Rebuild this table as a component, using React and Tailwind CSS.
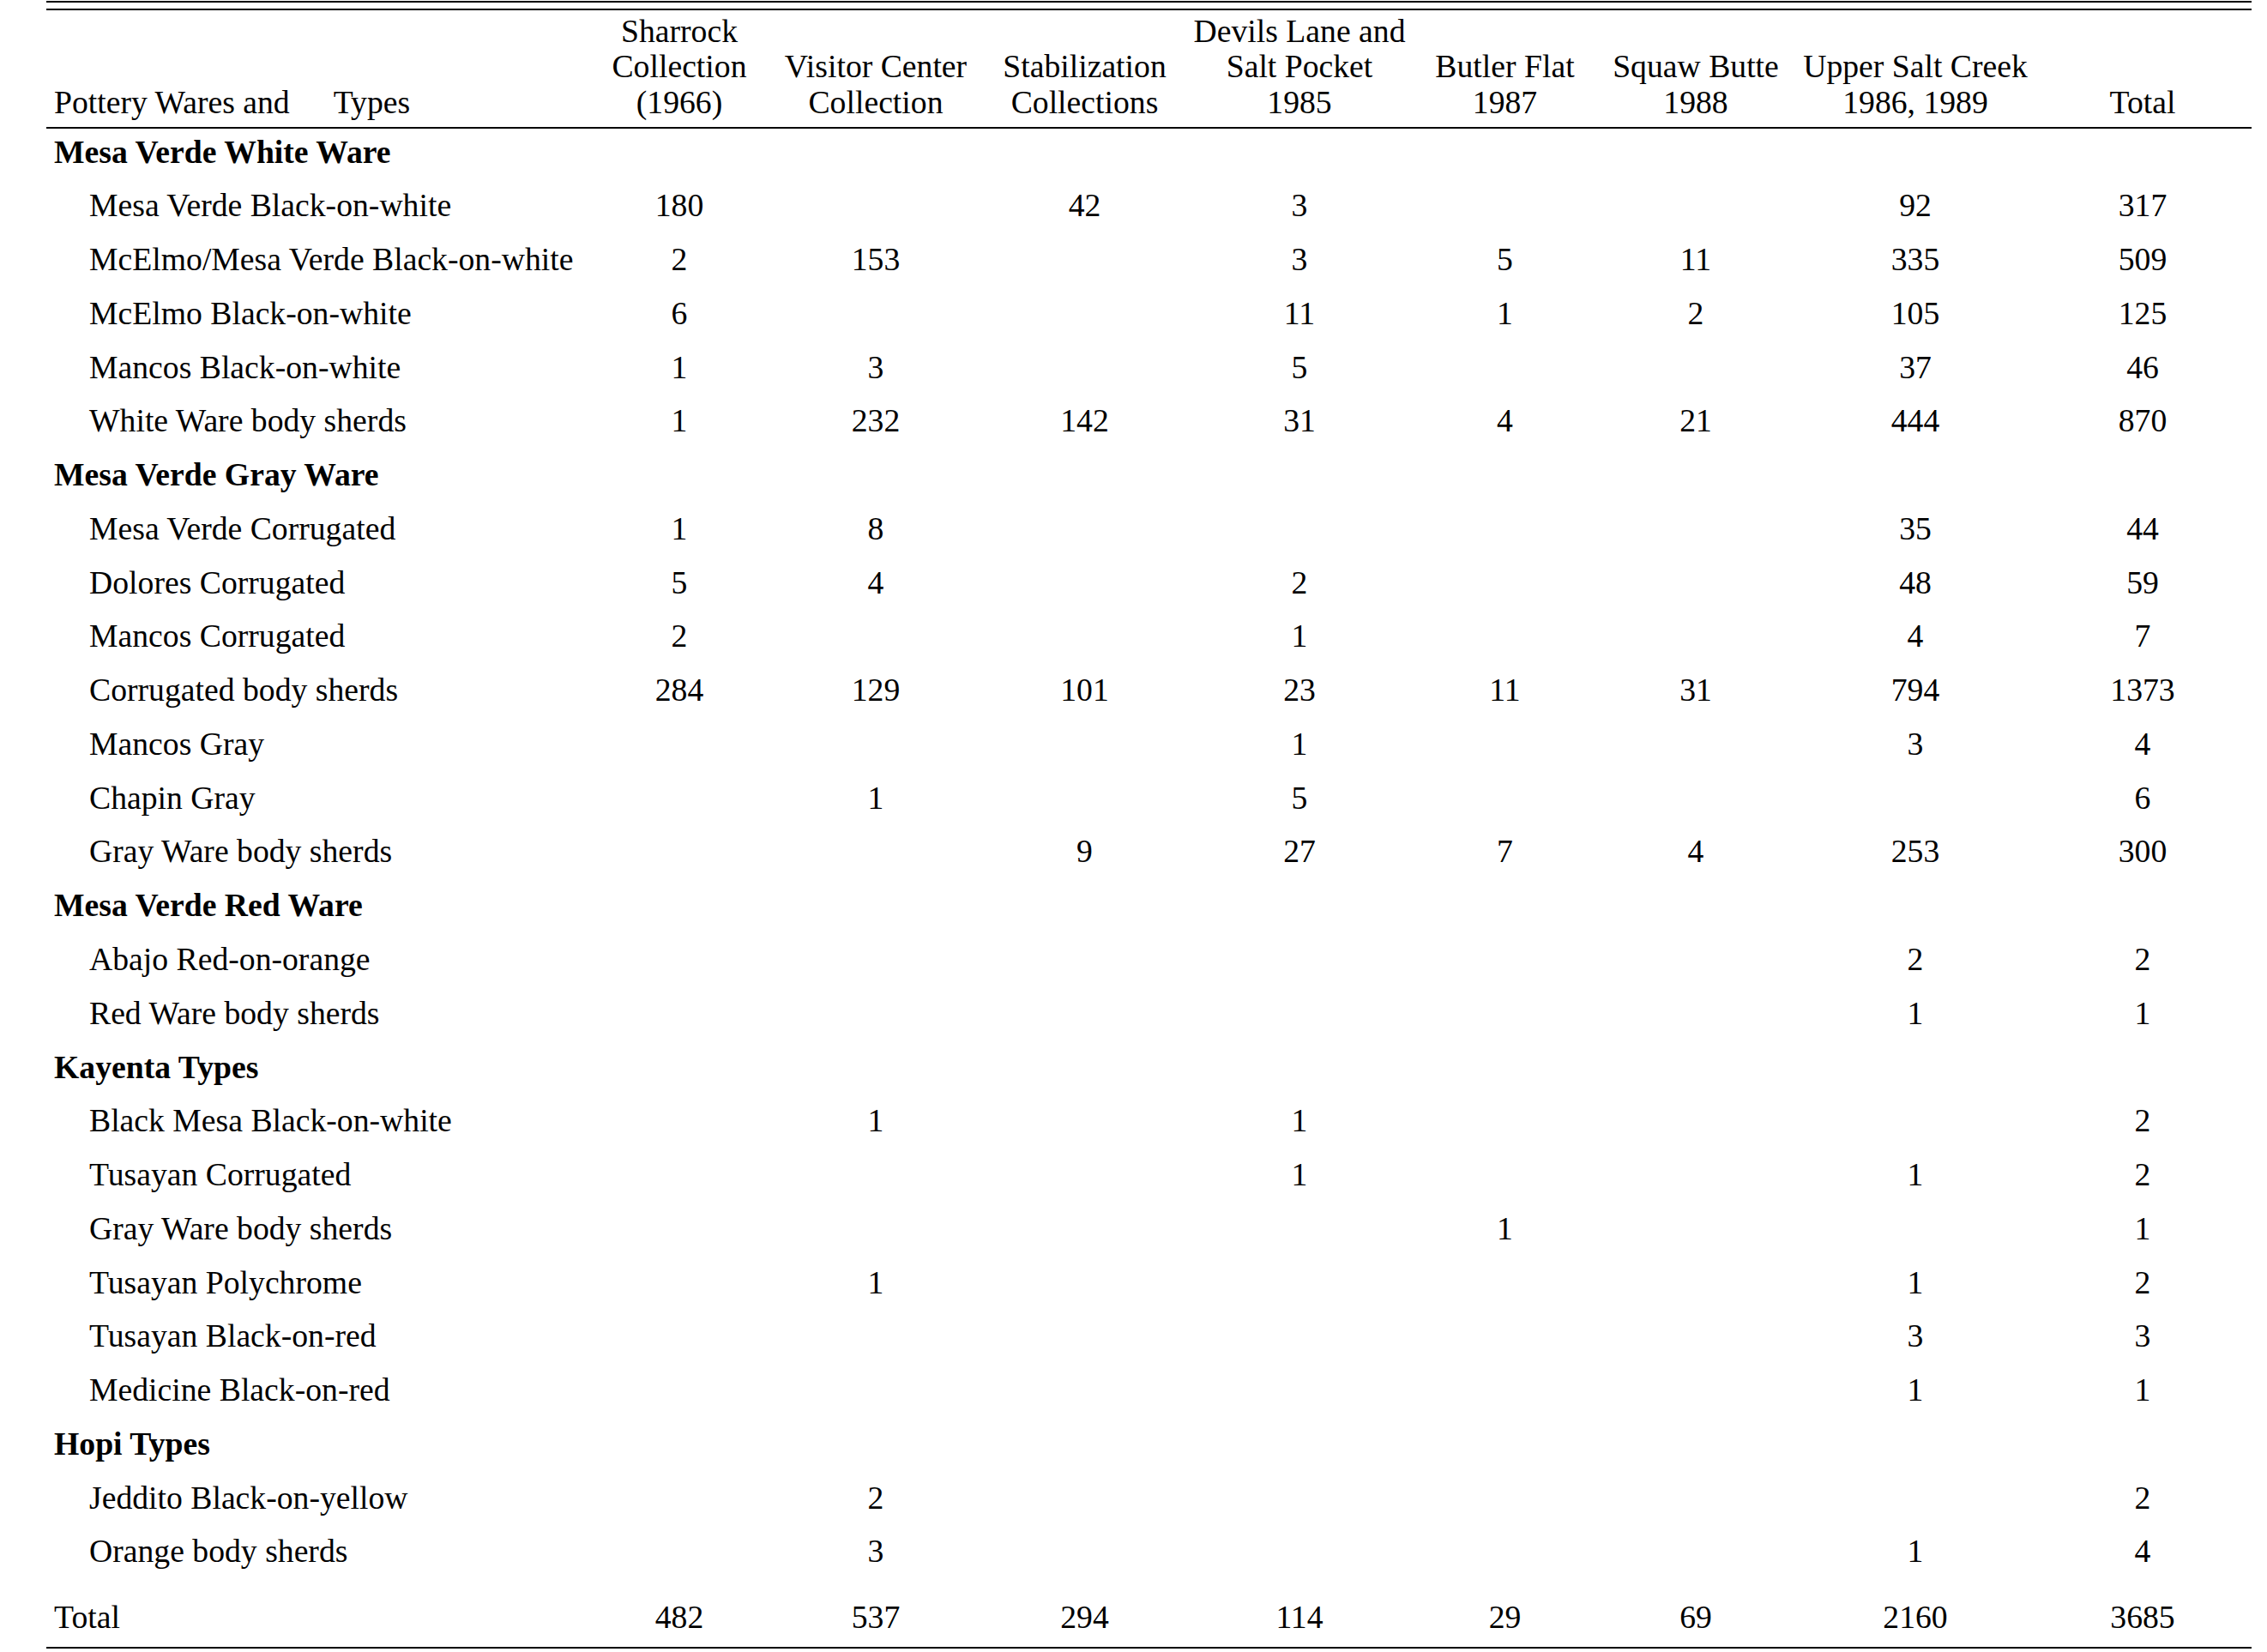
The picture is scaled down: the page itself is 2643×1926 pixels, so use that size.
import React from "react";

const COLS = "grid grid-cols-[623px_230px_228px_259px_242px_237px_208px_304px_226px]";

const headers = [
  ["Sharrock", "Collection", "(1966)"],
  ["Visitor Center", "Collection"],
  ["Stabilization", "Collections"],
  ["Devils Lane and", "Salt Pocket", "1985"],
  ["Butler Flat", "1987"],
  ["Squaw Butte", "1988"],
  ["Upper Salt Creek", "1986, 1989"],
  ["Total"],
];

const rows = [
  { s: "Mesa Verde White Ware" },
  { l: "Mesa Verde Black-on-white", v: ["180", "", "42", "3", "", "", "92", "317"] },
  { l: "McElmo/Mesa Verde Black-on-white", v: ["2", "153", "", "3", "5", "11", "335", "509"] },
  { l: "McElmo Black-on-white", v: ["6", "", "", "11", "1", "2", "105", "125"] },
  { l: "Mancos Black-on-white", v: ["1", "3", "", "5", "", "", "37", "46"] },
  { l: "White Ware body sherds", v: ["1", "232", "142", "31", "4", "21", "444", "870"] },
  { s: "Mesa Verde Gray Ware" },
  { l: "Mesa Verde Corrugated", v: ["1", "8", "", "", "", "", "35", "44"] },
  { l: "Dolores Corrugated", v: ["5", "4", "", "2", "", "", "48", "59"] },
  { l: "Mancos Corrugated", v: ["2", "", "", "1", "", "", "4", "7"] },
  { l: "Corrugated body sherds", v: ["284", "129", "101", "23", "11", "31", "794", "1373"] },
  { l: "Mancos Gray", v: ["", "", "", "1", "", "", "3", "4"] },
  { l: "Chapin Gray", v: ["", "1", "", "5", "", "", "", "6"] },
  { l: "Gray Ware body sherds", v: ["", "", "9", "27", "7", "4", "253", "300"] },
  { s: "Mesa Verde Red Ware" },
  { l: "Abajo Red-on-orange", v: ["", "", "", "", "", "", "2", "2"] },
  { l: "Red Ware body sherds", v: ["", "", "", "", "", "", "1", "1"] },
  { s: "Kayenta Types" },
  { l: "Black Mesa Black-on-white", v: ["", "1", "", "1", "", "", "", "2"] },
  { l: "Tusayan Corrugated", v: ["", "", "", "1", "", "", "1", "2"] },
  { l: "Gray Ware body sherds", v: ["", "", "", "", "1", "", "", "1"] },
  { l: "Tusayan Polychrome", v: ["", "1", "", "", "", "", "1", "2"] },
  { l: "Tusayan Black-on-red", v: ["", "", "", "", "", "", "3", "3"] },
  { l: "Medicine Black-on-red", v: ["", "", "", "", "", "", "1", "1"] },
  { s: "Hopi Types" },
  { l: "Jeddito Black-on-yellow", v: ["", "2", "", "", "", "", "", "2"] },
  { l: "Orange body sherds", v: ["", "3", "", "", "", "", "1", "4"] },
];

const totals = ["482", "537", "294", "114", "29", "69", "2160", "3685"];

function Cells({ values }) {
  return values.map((v, i) => (
    <div key={i} className="text-center whitespace-nowrap">
      {v}
    </div>
  ));
}

export default function App() {
  return (
    <div className="bg-white text-black font-['Liberation_Serif',serif] text-[37.7px] w-[2643px] h-[1926px]">
      <div className="ml-[54px] w-[2571px]">
        <div className="pt-[1px]">
          <div className="h-[2px] bg-black" />
          <div className="h-[2px] bg-black mt-[7px]" />
        </div>
        <div className={COLS + " items-end leading-[41.4px] h-[136px] pb-[8px]"}>
          <div className="pl-[9px] whitespace-nowrap">
            Pottery Wares and<span className="ml-[51px]">Types</span>
          </div>
          {headers.map((h, i) => (
            <div key={i} className="flex flex-col items-center whitespace-nowrap">
              {h.map((t, j) => (
                <div key={j}>{t}</div>
              ))}
            </div>
          ))}
        </div>
        <div className="h-[1.5px] bg-black" />
        <div className="leading-[41px]">
          {rows.map((r, i) =>
            r.s ? (
              <div key={i} className="h-[62.77px] pt-[7px] pl-[9px] font-bold whitespace-nowrap">
                {r.s}
              </div>
            ) : (
              <div key={i} className={COLS + " h-[62.77px] pt-[7px]"}>
                <div className="pl-[50px] whitespace-nowrap">{r.l}</div>
                <Cells values={r.v} />
              </div>
            )
          )}
          <div className={COLS + " mt-[21px] h-[41px]"}>
            <div className="pl-[9px]">Total</div>
            <Cells values={totals} />
          </div>
        </div>
        <div className="h-[2px] bg-black mt-[14px]" />
      </div>
    </div>
  );
}
